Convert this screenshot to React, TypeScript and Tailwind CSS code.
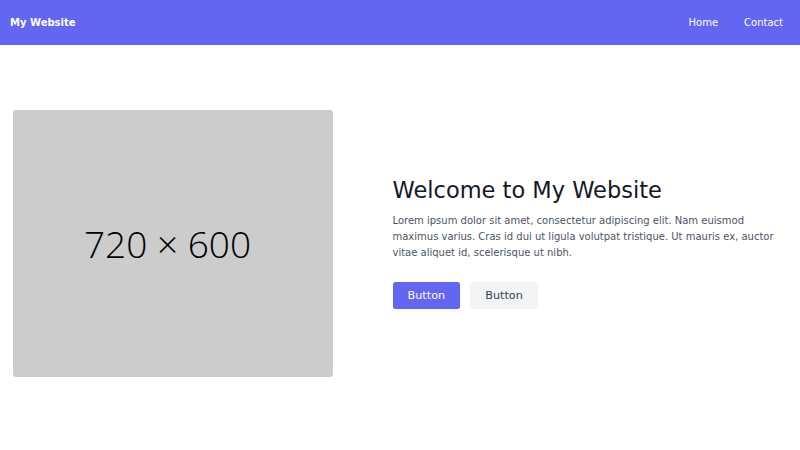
const App = () => {
  return (
    <div className="min-h-[450px] bg-white font-['DejaVu_Sans',sans-serif] text-[#4b5563]">
      {/* header */}
      <header className="flex h-[44.5px] items-center justify-between bg-[#6366f1] pl-[10px] pr-[17px] text-[10px] text-white">
        <span className="font-bold">My Website</span>
        <nav className="flex gap-[26px]">
          <a href="#">Home</a>
          <a href="#">Contact</a>
        </nav>
      </header>

      {/* hero */}
      <section className="flex items-center px-[12.5px] pt-[65.5px] pb-[60px]">
        {/* placeholder image */}
        <div className="flex h-[267px] w-[320px] shrink-0 items-center justify-center rounded-[3px] bg-[#cccccc] pr-[10px]">
          <span className="font-['Open_Sans',sans-serif] text-[37px] font-light text-black">
            720 × 600
          </span>
        </div>

        {/* content */}
        <div className="flex flex-1 flex-col items-start pl-[60px]">
          <h1 className="mb-[10px] text-[22.5px] leading-[25px] text-[#111827]">
            Welcome to My Website
          </h1>
          <p className="mb-[20px] text-[10px] leading-[16.25px]">
            Lorem ipsum dolor sit amet, consectetur adipiscing elit. Nam euismod
            maximus varius. Cras id dui ut ligula volutpat tristique. Ut mauris
            ex, auctor vitae aliquet id, scelerisque ut nibh.
          </p>
          <div className="flex gap-[10px]">
            <button className="rounded-[2.5px] bg-[#6366f1] px-[15px] py-[5px] text-[11.25px] leading-[17.5px] text-white">
              Button
            </button>
            <button className="rounded-[2.5px] bg-[#f3f4f6] px-[15px] py-[5px] text-[11.25px] leading-[17.5px] text-[#374151]">
              Button
            </button>
          </div>
        </div>
      </section>
    </div>
  );
};

export default App;
